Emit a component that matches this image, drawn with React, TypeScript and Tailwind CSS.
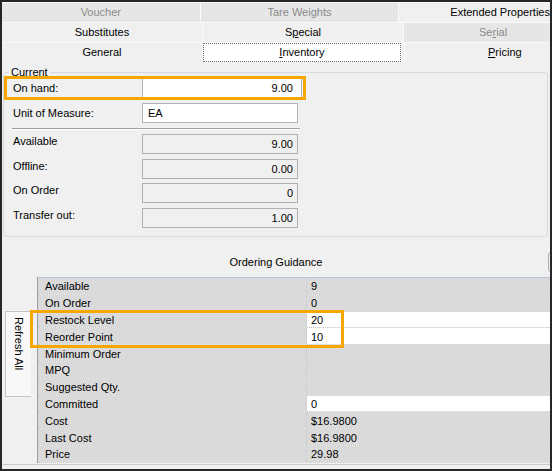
import React from 'react'

type TabProps = {
  label: React.ReactNode
  width: string
  disabled?: boolean
  selected?: boolean
  align?: string
}

function Tab({ label, width, disabled, selected, align = 'justify-center' }: TabProps) {
  if (selected) {
    return (
      <div className={`${width} flex items-center ${align} bg-white border border-dotted border-[#6b6b6b]`}>
        {label}
      </div>
    )
  }
  return (
    <div
      className={`${width} flex items-center ${align} whitespace-nowrap ${
        disabled ? 'bg-[#e6e6e6] text-[#8a8a8a]' : 'bg-[#f0f0f0]'
      }`}
    >
      {label}
    </div>
  )
}

const guidance: [string, string, boolean][] = [
  ['Available', '9', false],
  ['On Order', '0', false],
  ['Restock Level', '20', true],
  ['Reorder Point', '10', true],
  ['Minimum Order', '', false],
  ['MPQ', '', false],
  ['Suggested Qty.', '', false],
  ['Committed', '0', true],
  ['Cost', '$16.9800', false],
  ['Last Cost', '$16.9800', false],
  ['Price', '29.98', false],
]

function GridRow({ name, value, white }: { name: string; value: string; white: boolean }) {
  return (
    <div className="flex h-[16.8px] border-b border-dotted border-[#c9c9c9]">
      <div className="w-[269px] flex items-center pt-[2px] pl-[7px] border-r border-dotted border-[#c9c9c9] bg-[#dadada]">
        {name}
      </div>
      <div className={`flex-1 flex items-center pt-[2px] pl-[4px] ${white ? 'bg-white' : 'bg-[#dadada]'}`}>
        {value}
      </div>
    </div>
  )
}

function ReadOnly({ label, value, mt }: { label: string; value: string; mt: string }) {
  return (
    <div className={`flex ${mt}`}>
      <div className="w-[129px] pt-px">{label}</div>
      <div className="w-[156px] h-[20px] border border-[#b0b0b0] bg-[#f0f0f0] flex items-center justify-end pr-[4px]">
        {value}
      </div>
    </div>
  )
}

export default function App() {
  return (
    <div className="w-[552px] h-[471px] overflow-hidden border-2 border-[#262626] bg-[#f0f0f0] font-['Liberation_Sans',Arial,sans-serif] text-[11px] leading-[13px] text-black">
      {/* Tab rows */}
      <div className="flex flex-col gap-px bg-[#fafafa] pt-px">
        <div className="flex gap-px h-[19px]">
          <Tab width="w-[200px]" label="Voucher" disabled />
          <Tab width="w-[200px]" label="Tare Weights" disabled />
          <Tab width="flex-1" align="justify-start pl-[51px]" label="Extended Properties" />
        </div>
        <div className="flex gap-px h-[19px]">
          <Tab width="w-[200px]" label="Substitutes" />
          <Tab width="w-[200px]" label={<span>S<span className="underline">p</span>ecial</span>} />
          <Tab
            width="flex-1"
            align="justify-start pl-[75px]"
            disabled
            label={<span>Se<span className="underline">r</span>ial</span>}
          />
        </div>
        <div className="flex gap-px h-[19px]">
          <Tab width="w-[200px]" label="General" />
          <Tab width="w-[198px]" selected label={<span><span className="underline">I</span>nventory</span>} />
          <div className="w-[2px] bg-[#f0f0f0]" />
          <Tab
            width="flex-1"
            align="justify-start pl-[83px]"
            label={<span><span className="underline">P</span>ricing</span>}
          />
        </div>
      </div>

      {/* Current group */}
      <fieldset className="mt-[4px] ml-px mr-[2px] border border-[#d3dbe1] rounded-[3px] pl-[9px] pb-[8px]">
        <legend className="-ml-[4px] px-[2px] leading-[12px]">Current</legend>

        <div className="relative flex items-center h-[20px]">
          <div className="w-[129px]">On hand:</div>
          <div className="w-[160px] h-[20px] border border-[#b4b4b4] bg-white flex items-center justify-end pr-[8px]">
            9.00
          </div>
          <div className="absolute -left-[9px] -top-[2px] w-[302px] h-[24px] border-[3px] border-[#f5a700]" />
        </div>

        <div className="flex items-center h-[20px] mt-[5px]">
          <div className="w-[129px]">Unit of Measure:</div>
          <div className="w-[156px] h-[20px] border border-[#b4b4b4] bg-white flex items-center pl-[5px]">EA</div>
        </div>

        <div className="-ml-px w-[288px] mt-[5px] border-t border-[#a0a0a0] border-b border-b-white" />

        <ReadOnly label="Available" value="9.00" mt="mt-[4px]" />
        <ReadOnly label="Offline:" value="0.00" mt="mt-[5px]" />
        <ReadOnly label="On Order" value="0" mt="mt-[4px]" />
        <ReadOnly label="Transfer out:" value="1.00" mt="mt-[5px]" />
      </fieldset>

      {/* Ordering guidance header */}
      <div className="relative mt-[15px] h-[20px] flex items-center justify-center pt-px">
        Ordering Guidance
        <div className="absolute left-[546px] top-0 w-[40px] h-[20px] rounded-[3px] border border-[#adadad] bg-[#f0f0f0]" />
      </div>

      {/* Guidance grid */}
      <div className="flex mt-[5px]">
        <div className="w-[35px] shrink-0">
          <div className="mt-[34px] ml-[3px] w-[26px] h-[86px] border border-r-0 border-[#c4c4c4] bg-[#f8f8f8] flex justify-center pt-[5px]">
            <span className="[writing-mode:vertical-rl] leading-[13px]">Refresh All</span>
          </div>
        </div>
        <div className="flex-1 border-t border-t-[#b6c7d8] border-l border-l-[#9c9c9c]">
          {guidance.slice(0, 2).map(([n, v, w]) => (
            <GridRow key={n} name={n} value={v} white={w} />
          ))}
          <div className="relative">
            {guidance.slice(2, 4).map(([n, v, w]) => (
              <GridRow key={n} name={n} value={v} white={w} />
            ))}
            <div className="absolute -left-[8px] -top-[2px] w-[314px] h-[38px] border-[3px] border-[#f5a700]" />
          </div>
          {guidance.slice(4).map(([n, v, w]) => (
            <GridRow key={n} name={n} value={v} white={w} />
          ))}
        </div>
      </div>
      <div className="mt-px ml-px border-b border-[#c8c8c8]" />
    </div>
  )
}
